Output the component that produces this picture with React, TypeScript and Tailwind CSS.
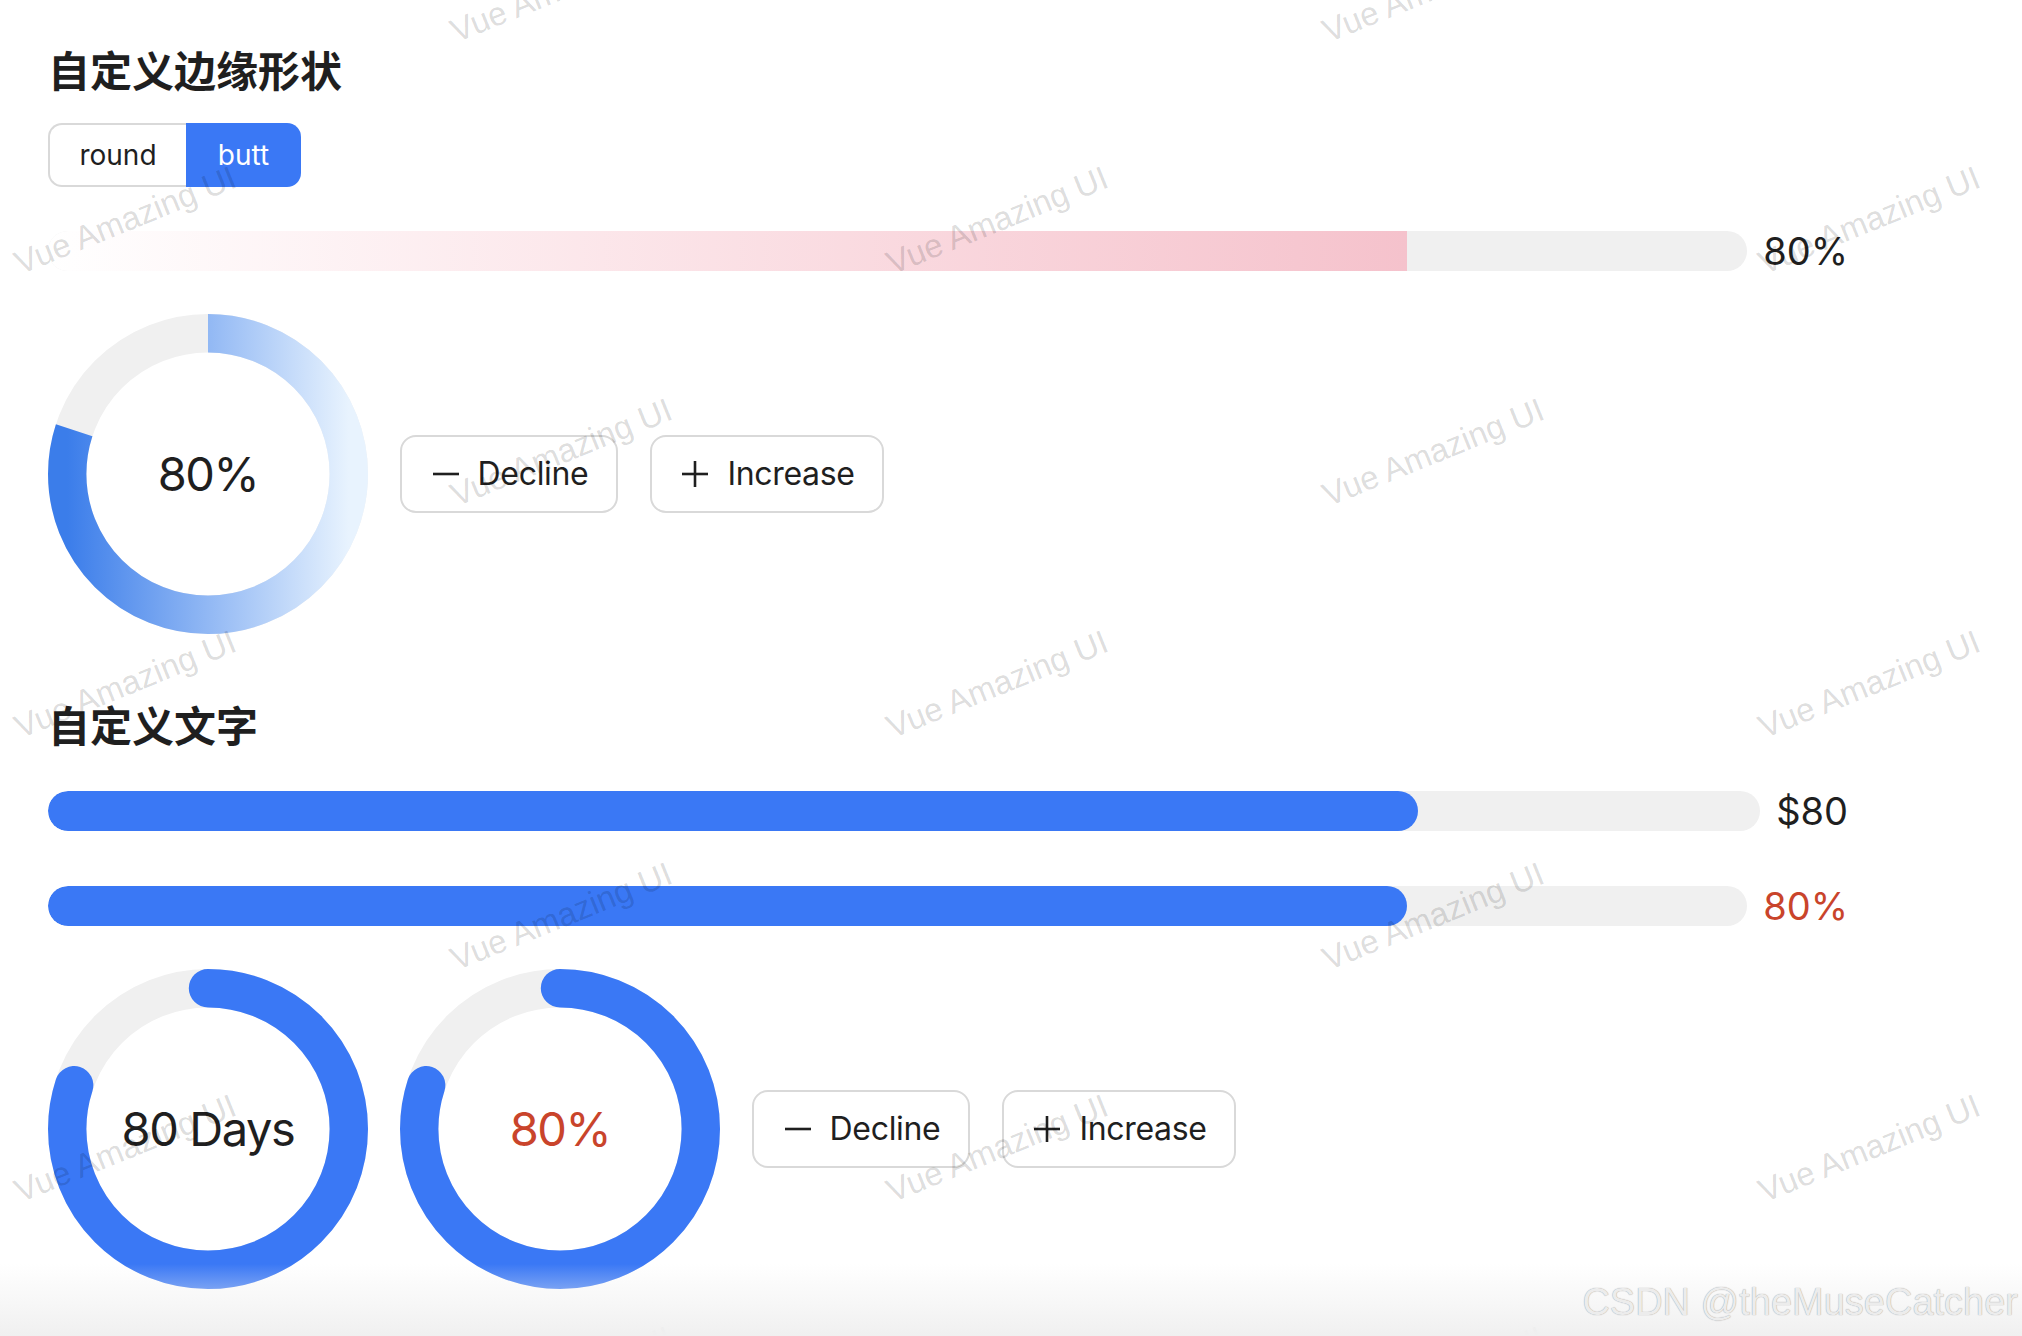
import React from "react";

const BLUE = "#3a78f5";

function MinusIcon() {
  return (
    <svg width="32" height="32" viewBox="0 0 32 32" className="shrink-0">
      <line x1="3" y1="16" x2="29" y2="16" stroke="#1f1f1f" strokeWidth="2.6" />
    </svg>
  );
}
function PlusIcon() {
  return (
    <svg width="32" height="32" viewBox="0 0 32 32" className="shrink-0">
      <line x1="3" y1="16" x2="29" y2="16" stroke="#1f1f1f" strokeWidth="2.6" />
      <line x1="16" y1="3" x2="16" y2="29" stroke="#1f1f1f" strokeWidth="2.6" />
    </svg>
  );
}

function ActionButtons() {
  return (
    <div className="flex items-center gap-[32px]">
      <button className="flex h-[78px] w-[218px] items-center justify-center gap-[16px] rounded-[16px] border-2 border-[#d9d9d9] bg-white text-[32px] tracking-[-0.01em] text-[#1f1f1f]">
        <MinusIcon />
        <span>Decline</span>
      </button>
      <button className="flex h-[78px] w-[234px] items-center justify-center gap-[16px] rounded-[16px] border-2 border-[#d9d9d9] bg-white text-[32px] tracking-[-0.01em] text-[#1f1f1f]">
        <PlusIcon />
        <span>Increase</span>
      </button>
    </div>
  );
}

const ARC = "M 50 6 A 44 44 0 1 1 50 94 A 44 44 0 1 1 50 6";
const CIRC = 2 * Math.PI * 44;

function Circle({
  id,
  round,
  gradient,
  children,
}: {
  id: string;
  round: boolean;
  gradient?: boolean;
  children: React.ReactNode;
}) {
  return (
    <div className="relative h-[320px] w-[320px] shrink-0">
      <svg width="320" height="320" viewBox="0 0 100 100" className="absolute inset-0">
        <defs>
          <linearGradient id={id} gradientUnits="userSpaceOnUse" x1="6" y1="0" x2="94" y2="0">
            <stop offset="0%" stopColor="#3b7dea" />
            <stop offset="100%" stopColor="#e8f3fe" />
          </linearGradient>
        </defs>
        <circle cx="50" cy="50" r="44" fill="none" stroke="#f0f0f0" strokeWidth="12" />
        <path
          d={ARC}
          fill="none"
          stroke={gradient ? `url(#${id})` : BLUE}
          strokeWidth="12"
          strokeLinecap={round ? "round" : "butt"}
          strokeDasharray={`${CIRC * 0.8} ${CIRC}`}
        />
      </svg>
      <div className="absolute inset-0 flex items-center justify-center">{children}</div>
    </div>
  );
}

function LineBar({
  label,
  labelClass,
  fill,
}: {
  label: string;
  labelClass: string;
  fill: React.ReactNode;
}) {
  return (
    <div className="flex h-[54px] w-[1800px] items-center">
      <div className="relative h-[40px] flex-1 overflow-hidden rounded-full bg-[#f0f0f0]">{fill}</div>
      <div className={`ml-[16px] text-[38px] leading-[54px] ${labelClass}`}>{label}</div>
    </div>
  );
}

function Watermarks() {
  const items: { x: number; y: number }[] = [];
  const ax = [125, 997, 1869];
  const ay = [220, 684, 1148];
  const bx = [561, 1433];
  const by = [-12, 452, 916, 1380];
  ay.forEach((y) => ax.forEach((x) => items.push({ x, y })));
  by.forEach((y) => bx.forEach((x) => items.push({ x, y })));
  return (
    <div className="pointer-events-none absolute inset-0 overflow-hidden">
      {items.map((p, i) => (
        <div
          key={i}
          className="absolute whitespace-nowrap text-[33px] leading-none text-black/15 [font-family:'Liberation_Sans',Arial,sans-serif]"
          style={{ left: p.x, top: p.y, transform: "translate(-50%, -50%) rotate(-22deg)" }}
        >
          Vue Amazing UI
        </div>
      ))}
    </div>
  );
}

export default function App() {
  return (
    <div className="relative h-[1336px] w-[2022px] overflow-hidden bg-white text-[#1f1f1f] [font-family:Inter,'Noto_Sans',sans-serif]">
      <div className="flex flex-col items-start pl-[48px] pt-[37px]">
        <h2 className="text-[42px] font-bold leading-[63px] [font-family:'Noto_Sans_CJK_SC','Noto_Sans',sans-serif]">
          自定义边缘形状
        </h2>
        <div className="mt-[23px] flex text-[28px]">
          <div className="flex h-[64px] w-[138px] items-center justify-center rounded-l-[14px] border-2 border-r-0 border-[#d9d9d9] bg-white text-[#1f1f1f]">
            round
          </div>
          <div className="flex h-[64px] w-[115px] items-center justify-center rounded-r-[14px] bg-[#3a78f5] text-white">
            butt
          </div>
        </div>
        <div className="mt-[37px]">
          <LineBar
            label="80%"
            labelClass="text-[#1f1f1f]"
            fill={<div className="h-full w-[80%] bg-linear-to-r from-white to-[#f5c2cc]" />}
          />
        </div>
        <div className="mt-[36px] flex items-center gap-[32px]">
          <Circle id="g1" round={false} gradient>
            <span className="text-[47px] tracking-[-0.03em] text-[#1f1f1f]">80%</span>
          </Circle>
          <ActionButtons />
        </div>

        <h2 className="mt-[58px] text-[42px] font-bold leading-[63px] [font-family:'Noto_Sans_CJK_SC','Noto_Sans',sans-serif]">
          自定义文字
        </h2>
        <div className="mt-[29px]">
          <LineBar
            label="$80"
            labelClass="text-[#1f1f1f]"
            fill={<div className="h-full w-[80%] rounded-full bg-[#3a78f5]" />}
          />
        </div>
        <div className="mt-[41px]">
          <LineBar
            label="80%"
            labelClass="text-[#c9442b]"
            fill={<div className="h-full w-[80%] rounded-full bg-[#3a78f5]" />}
          />
        </div>
        <div className="mt-[36px] flex items-center gap-[32px]">
          <Circle id="g2" round>
            <span className="text-[47px] tracking-[-0.03em] text-[#1f1f1f]">80 Days</span>
          </Circle>
          <Circle id="g3" round>
            <span className="text-[47px] tracking-[-0.03em] text-[#c9442b]">80%</span>
          </Circle>
          <ActionButtons />
        </div>
      </div>

      <Watermarks />

      <div className="pointer-events-none absolute bottom-0 left-0 right-0 h-[72px] bg-linear-to-b from-white/0 to-[#f0f0f0]" />
      <div className="pointer-events-none absolute bottom-[15px] right-[4px] text-[38px] leading-none text-[#ececec] [font-family:'Liberation_Sans',Arial,sans-serif] [text-shadow:0_0_1px_#8a8a8a]">
        CSDN @theMuseCatcher
      </div>
    </div>
  );
}
